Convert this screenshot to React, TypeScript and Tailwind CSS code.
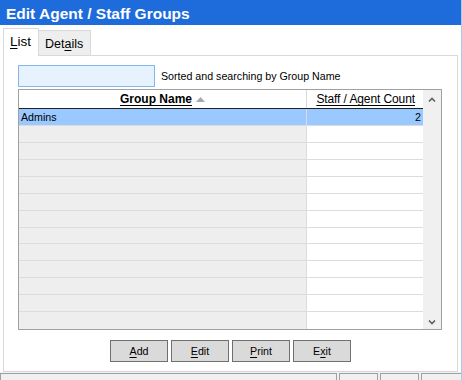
import React from "react";

const rows: { name: string; count: string; selected?: boolean }[] = [
  { name: "Admins", count: "2", selected: true },
  ...Array.from({ length: 12 }, () => ({ name: "", count: "" })),
];

// text with one underlined access-key letter
const Key = ({ text, at }: { text: string; at: number }) => (
  <span>
    {text.slice(0, at)}
    <span className="underline underline-offset-[2px]">{text[at]}</span>
    {text.slice(at + 1)}
  </span>
);

const buttons = [
  { text: "Add", at: 0 },
  { text: "Edit", at: 0 },
  { text: "Print", at: 0 },
  { text: "Exit", at: 1 },
];

const App = () => {
  return (
    <div className="w-[462px] h-[380px] bg-white border-r border-[#a9c9ef] flex flex-col overflow-hidden text-black font-['Liberation_Sans',Arial,sans-serif]">
      {/* Title bar */}
      <div className="h-[25px] shrink-0 bg-[#1e6bdb] text-white font-bold text-[15.5px] leading-[22px] pt-[3px] pl-[6px]">
        Edit Agent / Staff Groups
      </div>

      {/* Tabs */}
      <div className="h-[30px] shrink-0 flex items-end pl-[3px]">
        <div className="relative z-10 w-[36px] h-[28px] -mb-[1px] bg-white border-t border-l border-r border-[#d9d9d9] pl-[6px] pt-[6px] text-[13.5px] leading-none">
          <Key text="List" at={0} />
        </div>
        <div className="w-[52px] h-[25px] bg-[#eeeeee] border-t border-r border-[#d9d9d9] pl-[6px] pt-[7px] text-[12.5px] leading-none">
          <Key text="Details" at={3} />
        </div>
      </div>

      {/* Panel */}
      <div className="ml-[3px] w-[455px] h-[317px] shrink-0 border border-[#d9d9d9] bg-white flex flex-col pt-[9px]">
        {/* Search */}
        <div className="ml-[14px] h-[22px] flex items-center">
          <div className="w-[137px] h-[22px] border border-[#84b8ea] bg-[#e6f2fd]" />
          <span className="ml-[6px] text-[10.67px]">Sorted and searching by Group Name</span>
        </div>

        {/* Grid */}
        <div className="ml-[14px] mt-[2px] w-[424px] h-[241px] border border-[#a0a0a0] flex">
          <div className="w-[404px] flex flex-col">
            <div className="h-[18px] flex bg-white">
              <div className="w-[288px] border-r border-[#d9d9d9] flex items-center justify-center">
                <span className="font-bold text-[12px] underline underline-offset-[2px]">Group Name</span>
                <svg width="9" height="5" viewBox="0 0 9 5" className="ml-[4px]">
                  <path d="M4.5 0L9 5H0z" fill="#a8a8a8" />
                </svg>
              </div>
              <div className="w-[116px] flex items-center justify-end pr-[8px]">
                <span className="text-[12px] tracking-[-0.1px] underline underline-offset-[2px]">Staff / Agent Count</span>
              </div>
            </div>
            <div className="h-[1px] bg-[#222]" />
            {rows.map((r, i) => (
              <div
                key={i}
                className={`h-[17px] flex text-[10.67px] ${i < rows.length - 1 ? "border-b border-[#dcdcdc]" : ""}`}
              >
                <div
                  className={`w-[288px] border-r border-[#dcdcdc] pl-[2px] flex items-center ${r.selected ? "bg-[#99c9ff]" : "bg-[#eeeeee]"}`}
                >
                  {r.name}
                </div>
                <div
                  className={`w-[116px] pr-[2px] flex items-center justify-end ${r.selected ? "bg-[#99c9ff]" : "bg-white"}`}
                >
                  {r.count}
                </div>
              </div>
            ))}
          </div>
          {/* Scrollbar */}
          <div className="w-[18px] bg-[#f0f0f0] flex flex-col items-center justify-between pt-[7px] pb-[4px]">
            <svg width="8" height="5" viewBox="0 0 8 5">
              <path d="M1 4.5L4 1.5L7 4.5" fill="none" stroke="#606060" strokeWidth="1.6" />
            </svg>
            <svg width="8" height="5" viewBox="0 0 8 5">
              <path d="M1 0.5L4 3.5L7 0.5" fill="none" stroke="#606060" strokeWidth="1.6" />
            </svg>
          </div>
        </div>

        {/* Buttons */}
        <div className="mt-[10px] flex justify-center gap-[3px]">
          {buttons.map((b) => (
            <div
              key={b.text}
              className="w-[58px] h-[22px] border border-[#707070] bg-[#dadada] flex items-center justify-center text-[10.67px]"
            >
              <Key text={b.text} at={b.at} />
            </div>
          ))}
        </div>
      </div>

      {/* Status strip */}
      <div className="flex-1 bg-[#f0f0f0] flex gap-[2px] pt-[1px]">
        <div className="w-[337px] border-t border-l border-r border-[#a0a0a0]" />
        <div className="w-[39px] border-t border-l border-r border-[#a0a0a0]" />
        <div className="w-[39px] border-t border-l border-r border-[#a0a0a0]" />
        <div className="flex-1 border-t border-l border-[#a0a0a0]" />
      </div>
    </div>
  );
};

export default App;
